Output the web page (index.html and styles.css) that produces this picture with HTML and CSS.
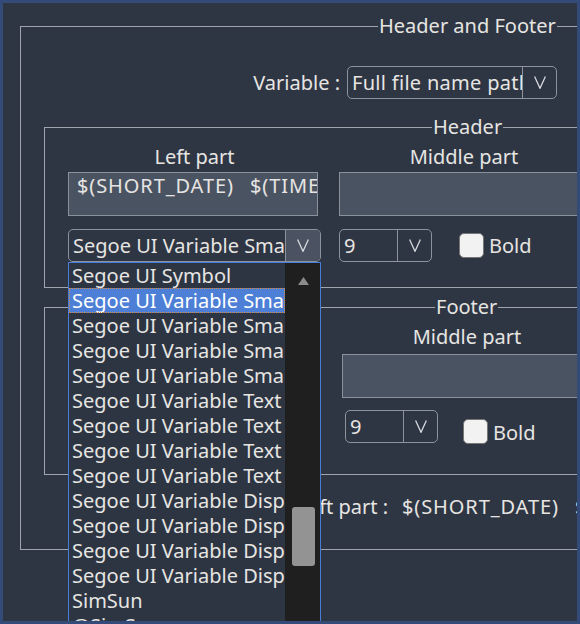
FILE: index.html
```html
<!DOCTYPE html>
<html>
<head>
<meta charset="utf-8">
<link rel="stylesheet" href="styles.css">
</head>
<body>
<div class="window">
  <fieldset class="group outer">
    <legend class="title-outer">Header and Footer</legend>
    <div class="var-row">
      <span class="var-label">Variable :</span>
      <div class="combo var-combo">
        <div class="combo-value">Full file name path</div>
        <div class="combo-btn"><svg width="12" height="13" viewBox="0 0 12 13"><path d="M0.6 0.5 L6 12.3 L11.4 0.5" fill="none" stroke="#d6d9de" stroke-width="1.3"/></svg></div>
      </div>
    </div>

    <fieldset class="group section">
      <legend class="title-header">Header</legend>
      <div class="parts">
        <div class="part-label">Left part</div>
        <div class="part-label">Middle part</div>
        <div class="textbox tb-left"><span class="vars">$(SHORT_DATE)&nbsp; $(TIME)</span></div>
        <div class="textbox tb-mid"></div>
        <div class="combo font-combo open">
          <div class="combo-value">Segoe UI Variable Small</div>
          <div class="combo-btn"><svg width="12" height="13" viewBox="0 0 12 13"><path d="M0.6 0.5 L6 12.3 L11.4 0.5" fill="none" stroke="#d6d9de" stroke-width="1.3"/></svg></div>
        </div>
        <div class="controls">
          <div class="combo size-combo">
            <div class="combo-value">9</div>
            <div class="combo-btn"><svg width="12" height="13" viewBox="0 0 12 13"><path d="M0.6 0.5 L6 12.3 L11.4 0.5" fill="none" stroke="#d6d9de" stroke-width="1.3"/></svg></div>
          </div>
          <span class="checkbox"></span>
          <span class="check-label">Bold</span>
        </div>
      </div>
    </fieldset>

    <fieldset class="group section footer">
      <legend class="title-footer">Footer</legend>
      <div class="parts parts-footer">
        <div class="part-label">Left part</div>
        <div class="part-label">Middle part</div>
        <div class="textbox tb-left"></div>
        <div class="textbox tb-mid"></div>
        <div class="combo font-combo">
          <div class="combo-value">Segoe UI</div>
          <div class="combo-btn"><svg width="12" height="13" viewBox="0 0 12 13"><path d="M0.6 0.5 L6 12.3 L11.4 0.5" fill="none" stroke="#d6d9de" stroke-width="1.3"/></svg></div>
        </div>
        <div class="controls controls-footer">
          <div class="combo size-combo">
            <div class="combo-value">9</div>
            <div class="combo-btn"><svg width="12" height="13" viewBox="0 0 12 13"><path d="M0.6 0.5 L6 12.3 L11.4 0.5" fill="none" stroke="#d6d9de" stroke-width="1.3"/></svg></div>
          </div>
          <span class="checkbox"></span>
          <span class="check-label">Bold</span>
        </div>
      </div>
    </fieldset>

    <div class="summary">
      <span class="summary-label">Left part :</span>
      <span class="summary-value vars">$(SHORT_DATE)&nbsp; $(TIME)</span>
    </div>
  </fieldset>

  <div class="dropdown">
    <div class="items">
      <div class="item">Segoe UI Symbol</div>
      <div class="item selected">Segoe UI Variable Small</div>
      <div class="item">Segoe UI Variable Small Light</div>
      <div class="item">Segoe UI Variable Small Semibold</div>
      <div class="item">Segoe UI Variable Small Semilight</div>
      <div class="item">Segoe UI Variable Text</div>
      <div class="item">Segoe UI Variable Text Light</div>
      <div class="item">Segoe UI Variable Text Semibold</div>
      <div class="item">Segoe UI Variable Text Semilight</div>
      <div class="item">Segoe UI Variable Display</div>
      <div class="item">Segoe UI Variable Display Light</div>
      <div class="item">Segoe UI Variable Display Semibold</div>
      <div class="item">Segoe UI Variable Display Semilight</div>
      <div class="item">SimSun</div>
      <div class="item">@SimSun</div>
    </div>
    <div class="scrollbar">
      <svg class="arrow" width="11" height="8" viewBox="0 0 11 8"><polygon points="5.5,0 11,8 0,8" fill="#8c8c8c"/></svg>
      <div class="thumb"></div>
    </div>
  </div>
</div>
</body>
</html>
```

FILE: styles.css
```css
html, body {
  margin: 0;
  padding: 0;
  background: #2e3644;
}

.window {
  width: 580px;
  height: 624px;
  box-sizing: border-box;
  border: 3px solid #344a78;
  background: #2e3644;
  overflow: hidden;
  position: relative;
  padding: 10px 0 0 17px;
  color: #e7e5e2;
  font-family: "Noto Sans", "Open Sans", sans-serif;
  font-size: 20px;
  line-height: 26px;
}

.group {
  margin: 0;
  padding: 0;
  border: 1px solid #a0a5ad;
  min-width: 0;
  box-sizing: border-box;
}

.group > legend {
  padding: 0 1px;
  height: 26px;
  line-height: 26px;
  white-space: nowrap;
}

.outer {
  width: 800px;
  padding-bottom: 29px;
}

.title-outer { margin-left: 357px; }
.title-header { margin-left: 387px; }
.title-footer { margin-left: 390px; }

.var-row {
  display: flex;
  justify-content: flex-end;
  align-items: center;
  gap: 7px;
  width: 536px;
  margin-top: 27px;
}

.var-combo { width: 210px; }
.var-combo .combo-value { letter-spacing: 0.3px; }

.section {
  width: 760px;
  margin: 15px 0 0 23px;
}

.section.footer { margin-top: 6px; }

.parts {
  display: grid;
  grid-template-columns: 253px 250px;
  column-gap: 18px;
  padding: 4px 0 25px 23px;
}

.parts-footer {
  column-gap: 21px;
  padding-bottom: 31px;
}

.part-label {
  text-align: center;
  white-space: nowrap;
}

.textbox {
  height: 44px;
  box-sizing: border-box;
  margin-top: 2px;
  background: #4a5362;
  border: 1px solid #8a919b;
  padding-left: 8px;
  white-space: nowrap;
  overflow: hidden;
}

.vars {
  letter-spacing: 0.9px;
  word-spacing: 2px;
}

.tb-left { width: 250px; }
.tb-mid { width: 250px; }

.parts-footer .textbox { margin-top: 4px; }

.combo {
  display: flex;
  height: 33px;
  box-sizing: border-box;
  border: 1px solid #8c939d;
  border-radius: 5px;
  overflow: hidden;
}

.combo-value {
  flex: 1;
  min-width: 0;
  padding-left: 4px;
  line-height: 31px;
  white-space: nowrap;
  overflow: hidden;
}

.combo-btn {
  width: 34px;
  flex: none;
  box-sizing: border-box;
  border-left: 1px solid #8c939d;
  display: flex;
  align-items: center;
  justify-content: center;
}

.font-combo {
  width: 253px;
  margin-top: 13px;
}

.font-combo .combo-btn { width: 35px; }

.combo.open .combo-btn { background: #4b5363; }

.controls {
  display: flex;
  align-items: center;
  margin-top: 13px;
}

.parts-footer .font-combo,
.parts-footer .controls { margin-top: 12px; }

.size-combo { width: 93px; }

.controls-footer { align-items: flex-end; }
.controls-footer .size-combo { margin-left: 3px; }

.checkbox {
  width: 25px;
  height: 25px;
  box-sizing: border-box;
  margin-left: 27px;
  background: #f2f2f2;
  border: 1px solid #767676;
  border-radius: 5px;
}

.controls-footer .checkbox { margin-left: 25px; margin-bottom: -1px; }

.check-label {
  margin-left: 5px;
  line-height: 26px;
}

.controls-footer .check-label { margin-bottom: -3px; }

.summary {
  display: flex;
  margin-top: 19px;
  white-space: nowrap;
}

.summary-label {
  width: 367px;
  flex: none;
  text-align: right;
}

.summary-value { margin-left: 14px; }

.dropdown {
  position: absolute;
  left: 65px;
  top: 259px;
  width: 253px;
  height: 380px;
  box-sizing: border-box;
  border: 1px solid #4a7dd9;
  background: #2d3543;
  display: flex;
}

.items {
  flex: 1;
  min-width: 0;
}

.item {
  height: 25px;
  line-height: 25px;
  padding-left: 3px;
  white-space: nowrap;
  overflow: hidden;
}

.item.selected {
  background: #4d7fd6;
  color: #ffffff;
  outline: 1px dotted #d98a3a;
  outline-offset: -1px;
}

.scrollbar {
  width: 35px;
  flex: none;
  background: #1f1f1f;
  display: flex;
  flex-direction: column;
  align-items: flex-start;
}

.arrow {
  display: block;
  margin: 14px 0 0 13px;
}

.thumb {
  width: 23px;
  height: 59px;
  margin: 222px 0 0 7px;
  background: #939393;
  border-radius: 3px;
}
```
